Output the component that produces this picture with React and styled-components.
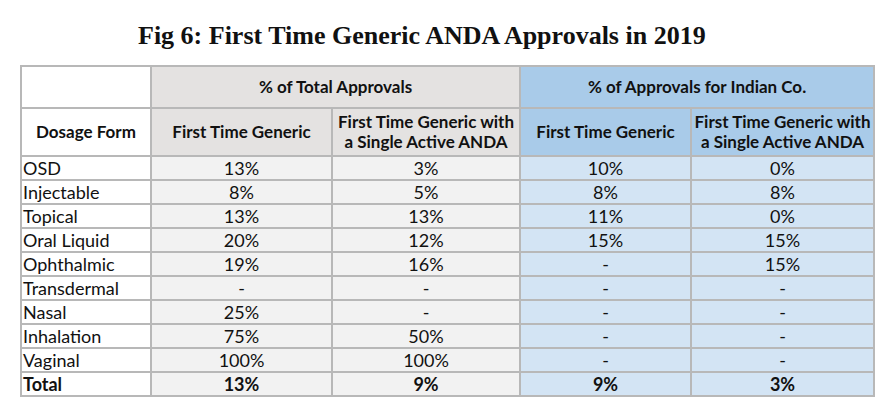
import React from "react";
import styled, {createGlobalStyle} from "styled-components";

const GlobalStyle = createGlobalStyle`
    body {
        margin: 0;
        background: #ffffff;
    }
`;

const rows = [
    ["OSD", "13%", "3%", "10%", "0%"],
    ["Injectable", "8%", "5%", "8%", "8%"],
    ["Topical", "13%", "13%", "11%", "0%"],
    ["Oral Liquid", "20%", "12%", "15%", "15%"],
    ["Ophthalmic", "19%", "16%", "-", "15%"],
    ["Transdermal", "-", "-", "-", "-"],
    ["Nasal", "25%", "-", "-", "-"],
    ["Inhalation", "75%", "50%", "-", "-"],
    ["Vaginal", "100%", "100%", "-", "-"],
]
const total = ["Total", "13%", "9%", "9%", "3%"]

const colWidths = [130, 181, 188, 171, 183]

export default function App() {
    return (
        <Page>
            <GlobalStyle/>
            <Title>Fig 6: First Time Generic ANDA Approvals in 2019</Title>
            <Table>
                <colgroup>
                    {colWidths.map((w, i) => <col key={i} style={{width: w}}/>)}
                </colgroup>
                <thead>
                    <GroupRow>
                        <HeadCell tone={'white'}/>
                        <HeadCell tone={'grey'} colSpan={2}>% of Total Approvals</HeadCell>
                        <HeadCell tone={'blue'} colSpan={2}>% of Approvals for Indian Co.</HeadCell>
                    </GroupRow>
                    <SubRow>
                        <HeadCell tone={'white'}>Dosage Form</HeadCell>
                        <HeadCell tone={'grey'}>First Time Generic</HeadCell>
                        <HeadCell tone={'grey'}>First Time Generic with<br/>a Single Active ANDA</HeadCell>
                        <HeadCell tone={'blue'}>First Time Generic</HeadCell>
                        <HeadCell tone={'blue'}>First Time Generic with<br/>a Single Active ANDA</HeadCell>
                    </SubRow>
                </thead>
                <tbody>
                    {rows.map((r) => (
                        <BodyRow key={r[0]}>
                            <NameCell>{r[0]}</NameCell>
                            <ValueCell tone={'grey'}>{r[1]}</ValueCell>
                            <ValueCell tone={'grey'}>{r[2]}</ValueCell>
                            <ValueCell tone={'blue'}>{r[3]}</ValueCell>
                            <ValueCell tone={'blue'}>{r[4]}</ValueCell>
                        </BodyRow>
                    ))}
                    <BodyRow bold>
                        <NameCell>{total[0]}</NameCell>
                        <ValueCell tone={'grey'}>{total[1]}</ValueCell>
                        <ValueCell tone={'grey'}>{total[2]}</ValueCell>
                        <ValueCell tone={'blue'}>{total[3]}</ValueCell>
                        <ValueCell tone={'blue'}>{total[4]}</ValueCell>
                    </BodyRow>
                </tbody>
            </Table>
        </Page>
    )
}

const headTones = {white: '#ffffff', grey: '#e4e2e1', blue: '#a9cbe9'}
const bodyTones = {white: '#ffffff', grey: '#f2f2f2', blue: '#d3e4f4'}

const Page = styled.div`
    width: 888px;
    height: 400px;
    padding: 0 0 0 20px;
    box-sizing: border-box;
    background: #ffffff;
    overflow: hidden;
`;

const Title = styled.h1`
    margin: 0;
    padding: 21px 0 0 118px;
    height: 65px;
    box-sizing: border-box;
    font-family: "Liberation Serif", "Times New Roman", serif;
    font-weight: bold;
    font-size: 26px;
    line-height: 30px;
    color: #111111;
    white-space: nowrap;
`;

const Table = styled.table`
    border-collapse: collapse;
    table-layout: fixed;
    width: 853px;
    font-family: Lato, "Liberation Sans", sans-serif;
    font-size: 18px;
    color: #111111;
    border: 2px solid #b3b3b3;
`;

const GroupRow = styled.tr`
    height: 42px;
`;

const SubRow = styled.tr`
    height: 48px;
`;

const BodyRow = styled.tr`
    height: 24px;
    font-weight: ${props => props.bold ? 'bold' : 'normal'};
`;

const HeadCell = styled.th`
    background: ${props => headTones[props.tone]};
    border: 2px solid #b8b8b8;
    font-size: 17px;
    font-weight: bold;
    text-align: center;
    vertical-align: middle;
    line-height: 20px;
    padding: 0 2px;
`;

const NameCell = styled.td`
    background: #ffffff;
    border: 2px solid #b8b8b8;
    padding: 0 0 0 1px;
    line-height: 20px;
    white-space: nowrap;
`;

const ValueCell = styled.td`
    background: ${props => bodyTones[props.tone]};
    border: 2px solid #b8b8b8;
    text-align: center;
    padding: 0;
    line-height: 20px;
`;
